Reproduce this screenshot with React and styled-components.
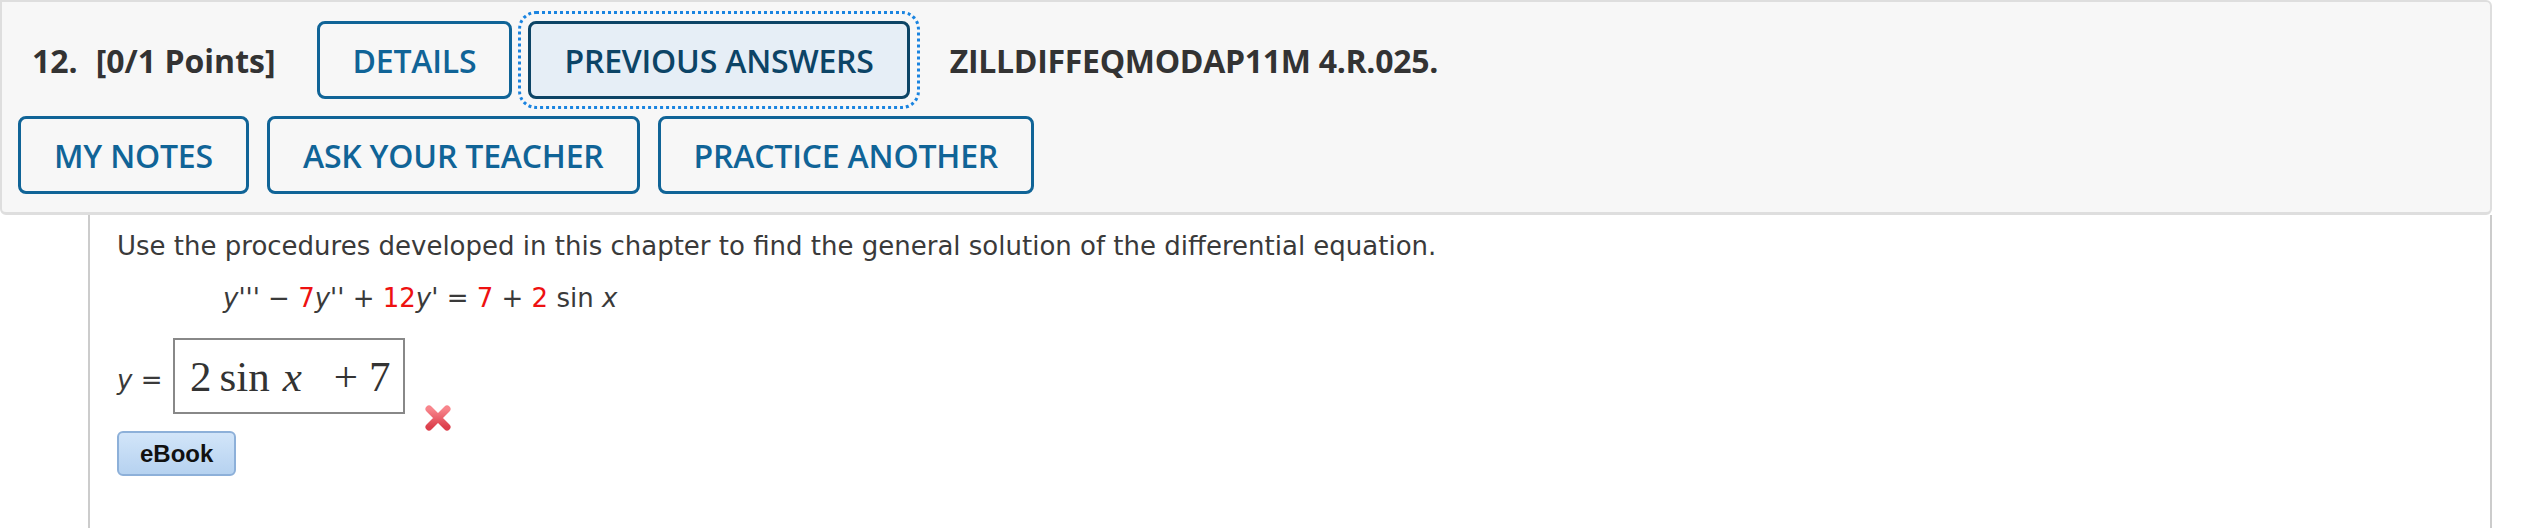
import React from "react"
import styled, { createGlobalStyle } from "styled-components"

const GlobalStyle = createGlobalStyle`
  html, body {
    margin: 0;
    padding: 0;
    background: #ffffff;
  }
  body {
    font-family: "Open Sans", "DejaVu Sans", sans-serif;
  }
`

const Page = styled.div`
  width: 2526px;
  height: 528px;
  overflow: hidden;
`

const Header = styled.div`
  width: 2492px;
  box-sizing: border-box;
  background: #f7f7f7;
  border: 2px solid #dedede;
  border-bottom-width: 3px;
  border-radius: 0 6px 6px 6px;
  padding: 19px 0 18px 16px;
`

const Row = styled.div`
  display: flex;
  align-items: center;
  height: 78px;
  margin-top: ${(p) => p.$top || 0}px;
`

const Label = styled.span`
  font-family: "Open Sans", sans-serif;
  font-weight: 700;
  font-size: 32px;
  letter-spacing: ${(p) => (p.$tight ? "-0.3px" : "0")};
  color: #333333;
  margin-left: ${(p) => p.$left || 0}px;
  white-space: nowrap;
`

const Button = styled.button`
  box-sizing: border-box;
  height: 78px;
  margin-left: ${(p) => p.$left || 0}px;
  padding: 0 33px;
  border: 3px solid ${(p) => (p.$active ? "#0c4466" : "#106497")};
  border-radius: 8px;
  background: ${(p) => (p.$active ? "#e6eef6" : "transparent")};
  color: ${(p) => (p.$active ? "#0c4466" : "#106497")};
  font-family: "Open Sans", sans-serif;
  font-weight: 600;
  font-size: 32px;
  letter-spacing: -0.2px;
  white-space: nowrap;
  outline: ${(p) => (p.$active ? "3px dotted #1a84e0" : "none")};
  outline-offset: 7px;
`

const Body = styled.div`
  margin-left: 88px;
  width: 2404px;
  box-sizing: border-box;
  min-height: 313px;
  border-left: 2px solid #cccccc;
  border-right: 2px solid #cccccc;
  padding: 13px 0 0 27px;
  font-family: "DejaVu Sans", Verdana, sans-serif;
  font-size: 26px;
  color: #3a3a3a;
`

const Line = styled.div`
  line-height: 36px;
  margin-top: ${(p) => p.$top || 0}px;
  margin-left: ${(p) => p.$left || 0}px;
  white-space: nowrap;
`

const Red = styled.span`
  color: #ee1111;
`

const AnswerRow = styled.div`
  display: flex;
  align-items: flex-start;
  margin-top: 22px;
  height: 76px;
`

const YLabel = styled.span`
  line-height: 36px;
  margin-top: 24px;
  width: 56px;
  white-space: nowrap;
`

const AnswerBox = styled.div`
  box-sizing: border-box;
  width: 232px;
  height: 76px;
  border: 2px solid #888888;
  display: flex;
  align-items: center;
  padding-left: 15px;
  font-family: "Liberation Serif", "DejaVu Serif", serif;
  font-size: 43px;
  color: #333333;
  white-space: nowrap;
`

const MathPart = styled.span`
  margin-left: ${(p) => p.$left || 0}px;
  font-style: ${(p) => (p.$italic ? "italic" : "normal")};
`

const Cross = styled.svg`
  margin: 66px 0 0 19px;
  flex: none;
`

const EBook = styled.button`
  display: block;
  box-sizing: border-box;
  margin-top: 17px;
  height: 45px;
  padding: 0 21px;
  border: 2px solid #8db0d9;
  border-radius: 6px;
  background: linear-gradient(#d2e5f9, #b6d2f0);
  font-family: "Liberation Sans", Arial, sans-serif;
  font-weight: 700;
  font-size: 24px;
  color: #111111;
`

const App = () => {
  return (
    <Page>
      <GlobalStyle />
      <Header>
        <Row>
          <Label $left={14}>12.</Label>
          <Label $left={18}>[0/1 Points]</Label>
          <Button $left={41}>DETAILS</Button>
          <Button $left={16} $active>
            PREVIOUS ANSWERS
          </Button>
          <Label $left={40} $tight>
            ZILLDIFFEQMODAP11M 4.R.025.
          </Label>
        </Row>
        <Row $top={17}>
          <Button>MY NOTES</Button>
          <Button $left={18}>ASK YOUR TEACHER</Button>
          <Button $left={18}>PRACTICE ANOTHER</Button>
        </Row>
      </Header>
      <Body>
        <Line>
          Use the procedures developed in this chapter to find the general
          solution of the differential equation.
        </Line>
        <Line $top={16} $left={106}>
          <i>y'''</i> − <Red>7</Red>
          <i>y''</i> + <Red>12</Red>
          <i>y'</i> = <Red>7</Red> + <Red>2</Red> sin <i>x</i>
        </Line>
        <AnswerRow>
          <YLabel>
            <i>y</i> =
          </YLabel>
          <AnswerBox>
            <MathPart>2</MathPart>
            <MathPart $left={8}>sin</MathPart>
            <MathPart $left={13} $italic>
              x
            </MathPart>
            <MathPart $left={32}>+</MathPart>
            <MathPart $left={11}>7</MathPart>
          </AnswerBox>
          <Cross width="28" height="28" viewBox="0 0 28 28">
            <defs>
              <linearGradient id="crossFill" x1="0" y1="0" x2="0" y2="1">
                <stop offset="0" stopColor="#f8858c" />
                <stop offset="1" stopColor="#dc3f4c" />
              </linearGradient>
            </defs>
            <path
              d="M5 5 L23 23 M23 5 L5 23"
              stroke="url(#crossFill)"
              strokeWidth="7"
              strokeLinecap="round"
              fill="none"
            />
          </Cross>
        </AnswerRow>
        <EBook>eBook</EBook>
      </Body>
    </Page>
  )
}

export default App
